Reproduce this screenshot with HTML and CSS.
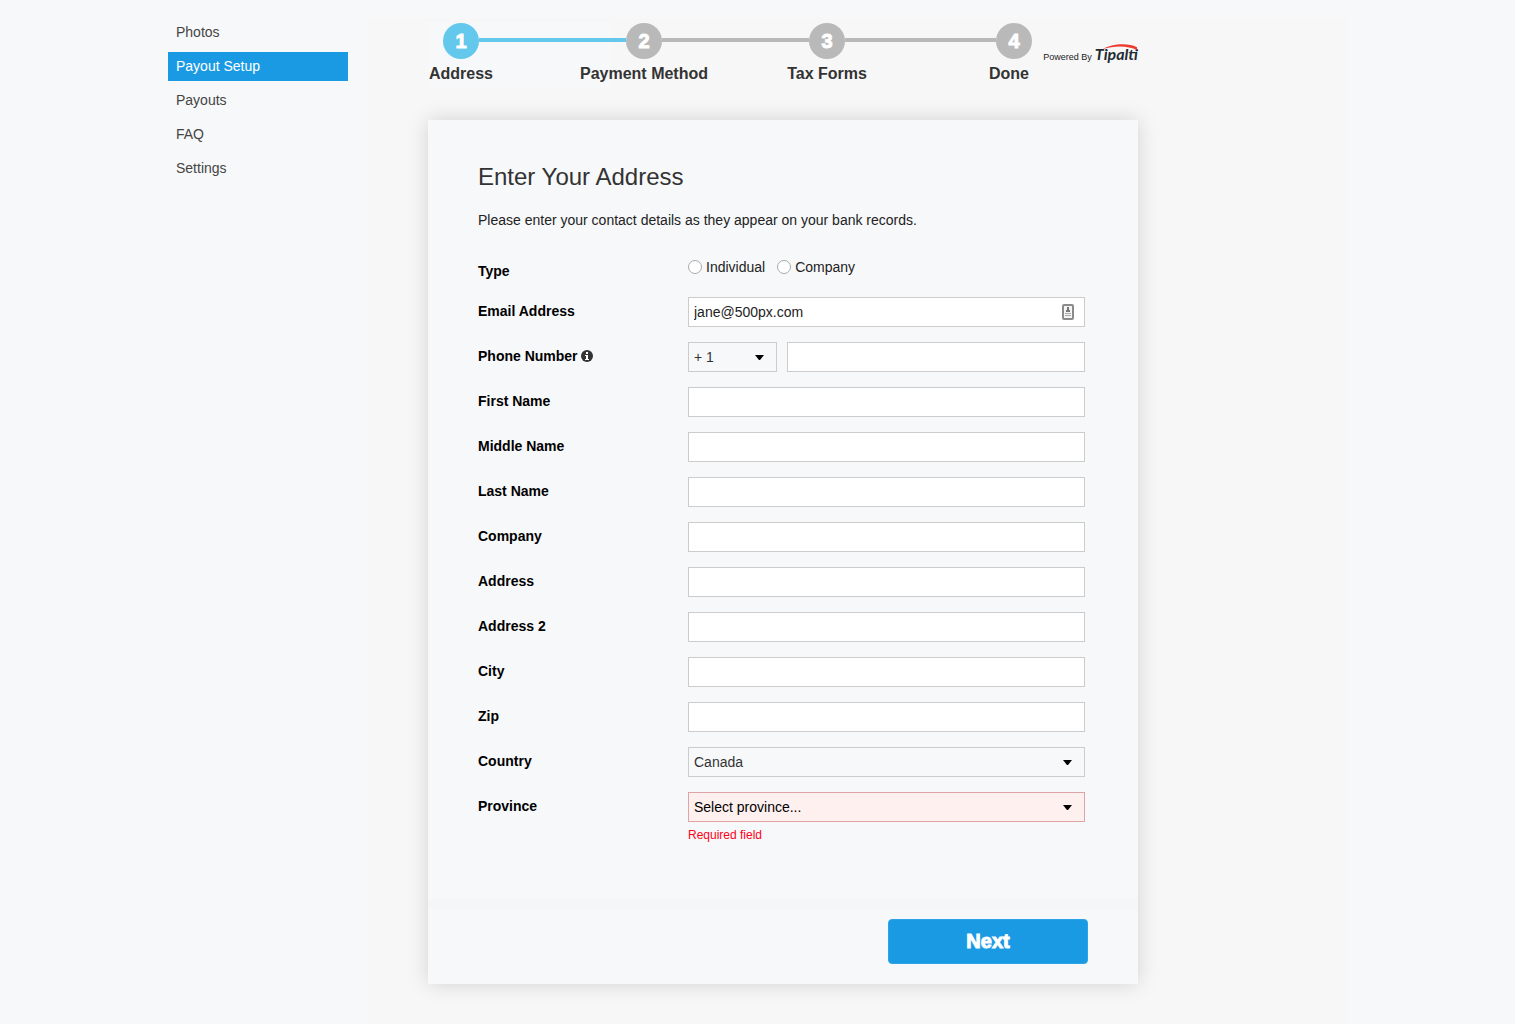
FILE: index.html
```html
<!DOCTYPE html>
<html lang="en">
<head>
    <meta charset="UTF-8">
    <meta name="viewport" content="width=device-width, initial-scale=1.0">
    <title>Payout Setup</title>
    <link rel="stylesheet" href="styles.css">
</head>
<body>
    <div class="page">
        <nav class="sidebar">
            <a href="#photos">Photos</a>
            <a href="#setup" class="active">Payout Setup</a>
            <a href="#payouts">Payouts</a>
            <a href="#faq">FAQ</a>
            <a href="#settings">Settings</a>
        </nav>

        <main class="content">
            <header class="progress">
                <ol class="steps">
                    <li class="step current"><span class="marker"><span class="number">1</span><span class="step-name">Address</span></span></li>
                    <li class="step"><span class="marker"><span class="number">2</span><span class="step-name">Payment Method</span></span></li>
                    <li class="step"><span class="marker"><span class="number">3</span><span class="step-name">Tax Forms</span></span></li>
                    <li class="step last"><span class="marker"><span class="number">4</span><span class="step-name">Done</span></span></li>
                </ol>
                <div class="powered">
                    <span class="powered-by">Powered By</span>
                    <span class="logo">Tipalti
                        <svg class="swoosh" viewBox="0 0 36 8" aria-hidden="true">
                            <path d="M1 5C9 .2 25-1.800 35 3.200V6C27 1.800 13 1 1 5z" fill="#ee3a30"/>
                        </svg>
                    </span>
                </div>
            </header>

            <form class="card">
                <div class="card-body">
                    <h1>Enter Your Address</h1>
                    <p class="intro">Please enter your contact details as they appear on your bank records.</p>

                    <div class="form-row type-row" role="radiogroup" aria-labelledby="typeLabel">
                        <span class="row-label type-label" id="typeLabel">Type</span>
                        <div class="radios">
                            <label><input type="radio" name="type" value="individual">Individual</label>
                            <label><input type="radio" name="type" value="company">Company</label>
                        </div>
                    </div>
                    <div class="form-row">
                        <label class="row-label" for="email">Email Address</label>
                        <div class="email-field">
                            <input type="email" id="email" name="email" value="jane@500px.com">
                            <svg class="autofill" viewBox="0 0 12 16" aria-hidden="true">
                                <rect x="1" y="1" width="10" height="14" rx="1" fill="#f4f4f4" stroke="#8b8b8b" stroke-width="2"/>
                                <path d="M5 3h2v3h1v2H4V6h1z" fill="#777"/>
                                <path d="M3 9h6v1H3zM3 11h6v1H3z" fill="#aaa"/>
                            </svg>
                        </div>
                    </div>
                    <div class="form-row">
                        <label class="row-label" for="phone">Phone Number
                            <svg class="info" viewBox="0 0 12 12" aria-hidden="true">
                                <circle cx="6" cy="6" r="6" fill="#333"/>
                                <path d="M5 2h2v2H5zM4 5h3v4h1v1H4V9h1V6H4z" fill="#fff"/>
                            </svg>
                        </label>
                        <div class="phone-fields">
                            <select name="code" aria-label="Country code"><option>+ 1</option></select>
                            <input type="tel" id="phone" name="phone">
                        </div>
                    </div>
                    <div class="form-row">
                        <label class="row-label" for="firstName">First Name</label>
                        <input type="text" id="firstName" name="firstName">
                    </div>
                    <div class="form-row">
                        <label class="row-label" for="middleName">Middle Name</label>
                        <input type="text" id="middleName" name="middleName">
                    </div>
                    <div class="form-row">
                        <label class="row-label" for="lastName">Last Name</label>
                        <input type="text" id="lastName" name="lastName">
                    </div>
                    <div class="form-row">
                        <label class="row-label" for="company">Company</label>
                        <input type="text" id="company" name="company">
                    </div>
                    <div class="form-row">
                        <label class="row-label" for="address">Address</label>
                        <input type="text" id="address" name="address">
                    </div>
                    <div class="form-row">
                        <label class="row-label" for="address2">Address 2</label>
                        <input type="text" id="address2" name="address2">
                    </div>
                    <div class="form-row">
                        <label class="row-label" for="city">City</label>
                        <input type="text" id="city" name="city">
                    </div>
                    <div class="form-row">
                        <label class="row-label" for="zip">Zip</label>
                        <input type="text" id="zip" name="zip">
                    </div>
                    <div class="form-row">
                        <label class="row-label" for="country">Country</label>
                        <select id="country" name="country"><option>Canada</option></select>
                    </div>
                    <div class="form-row">
                        <label class="row-label" for="province">Province</label>
                        <div>
                            <select id="province" name="province" class="invalid"><option>Select province...</option></select>
                            <div class="error-message">Required field</div>
                        </div>
                    </div>
                </div>
                <div class="card-footer">
                    <button type="submit" class="btn">Next</button>
                </div>
            </form>
        </main>
    </div>
</body>
</html>
```

FILE: styles.css
```css
* {
    box-sizing: border-box;
}
body {
    margin: 0;
    background: #f7f8fa;
    color: #222;
    font-family: "Liberation Sans", Arial, sans-serif;
    font-size: 14px;
}
.page {
    display: flex;
    gap: 20px;
    max-width: 1179px;
    min-height: 100vh;
    margin: 0 auto;
    padding-top: 18px;
}
.sidebar {
    display: flex;
    flex-direction: column;
    flex: 0 0 180px;
    gap: 5px;
}
.sidebar a {
    padding: 0 8px;
    line-height: 29px;
    color: #444;
    text-decoration: none;
}
.sidebar a.active {
    background: #1b9ae4;
    color: #fff;
}
.content {
    flex: 1;
    padding: 5px 209px 40px 60px;
    background: #f7f7f7;
}

/* progress steps */
.progress {
    display: flex;
    justify-content: space-between;
    margin-bottom: 31px;
}
.steps {
    display: grid;
    grid-template-columns: 198px 183px 187px 36px;
    margin: 0;
    padding: 0;
    list-style: none;
}
.step {
    display: flex;
    height: 66px;
}
.step::after {
    content: "";
    flex: 1;
    height: 4px;
    margin-top: 15px;
    background: #b9b9b9;
}
.step.current {
    padding-left: 15px;
    background: linear-gradient(#f7f8fa, #f7f8fa) no-repeat left / 183px 100%;
}
.step.current::after {
    background: #63c8ec;
}
.step.last::after {
    display: none;
}
.marker {
    display: flex;
    flex-direction: column;
    align-items: center;
    width: 36px;
}
.number {
    width: 36px;
    height: 36px;
    border-radius: 50%;
    background: #b9b9b9;
    color: #fff;
    font-size: 20px;
    font-weight: bold;
    line-height: 36px;
    text-align: center;
    -webkit-text-stroke: 1px #fff;
}
.current .number {
    background: #63c8ec;
}
.step-name {
    margin-top: 5px;
    color: #333;
    font-size: 16px;
    font-weight: bold;
    line-height: 20px;
    white-space: nowrap;
}
.last .marker {
    align-items: flex-end;
}
.last .step-name {
    padding-right: 3px;
}
.powered {
    display: flex;
    align-items: baseline;
    gap: 3px;
    padding-top: 19px;
    color: #222;
    white-space: nowrap;
}
.powered-by {
    font-size: 9px;
}
.logo {
    position: relative;
    color: #1f2b33;
    font-family: Lato, sans-serif;
    font-size: 16px;
    font-style: italic;
    font-weight: bold;
    line-height: 24px;
}
.swoosh {
    position: absolute;
    top: 2px;
    right: 0;
    width: 36px;
    height: 8px;
}

/* address form */
.card {
    background: #f7f8fa;
    box-shadow: 0 0 20px rgba(0, 0, 0, 0.15);
}
.card-body {
    padding: 42px 53px 41px 50px;
}
h1 {
    margin: 0 0 18px;
    color: #333;
    font-size: 24px;
    font-weight: normal;
    line-height: 30px;
}
.intro {
    margin: 0 0 22px;
    line-height: 20px;
}
.form-row {
    display: grid;
    grid-template-columns: 210px 1fr;
    margin-bottom: 15px;
}
.type-row {
    margin-bottom: 12px;
}
.row-label {
    color: #000;
    font-weight: bold;
    line-height: 28px;
}
.type-label {
    padding-top: 5px;
}
.radios {
    display: flex;
    gap: 12px;
    height: 30px;
}
.radios label {
    display: flex;
    align-items: center;
    gap: 4px;
}
input,
select {
    width: 100%;
    height: 30px;
    padding: 0 5px;
    border: 1px solid #ccc;
    border-radius: 0;
    background: #fff;
    color: #222;
    font-family: inherit;
    font-size: 14px;
}
.radios input {
    appearance: none;
    width: 14px;
    height: 14px;
    margin: 0;
    padding: 0;
    border: 1px solid #aaa;
    border-radius: 50%;
}
.radios input:checked {
    border: 4px solid #1b9ae4;
}
select {
    display: block;
    appearance: none;
    background: #f7f8fa url("data:image/svg+xml,%3Csvg xmlns='http://www.w3.org/2000/svg' width='9' height='5'%3E%3Cpath d='M0 0h9L5 5H4z'/%3E%3C/svg%3E") no-repeat right 12px center;
    color: #333;
}
select.invalid {
    border-color: #e0a3a6;
    background-color: #fff0f0;
    color: #000;
}
.email-field {
    position: relative;
}
.autofill {
    position: absolute;
    top: 7px;
    right: 11px;
    width: 12px;
    height: 16px;
}
.info {
    width: 12px;
    height: 12px;
    vertical-align: -1px;
}
.phone-fields {
    display: grid;
    grid-template-columns: 89px 1fr;
    gap: 10px;
}
.error-message {
    margin-top: 5px;
    color: #ff0018;
    font-size: 12px;
    line-height: 16px;
}
.card-footer {
    display: flex;
    justify-content: flex-end;
    padding: 20px 50px;
    background: linear-gradient(#f5f6f8, #f5f6f8) no-repeat top / 100% 10px;
}
.btn {
    width: 200px;
    height: 45px;
    border: 1px solid #2da3e8;
    border-radius: 4px;
    background: #1b9ae4;
    color: #fff;
    font-family: inherit;
    font-size: 20px;
    font-weight: bold;
    -webkit-text-stroke: 1px #fff;
    cursor: pointer;
}
```
